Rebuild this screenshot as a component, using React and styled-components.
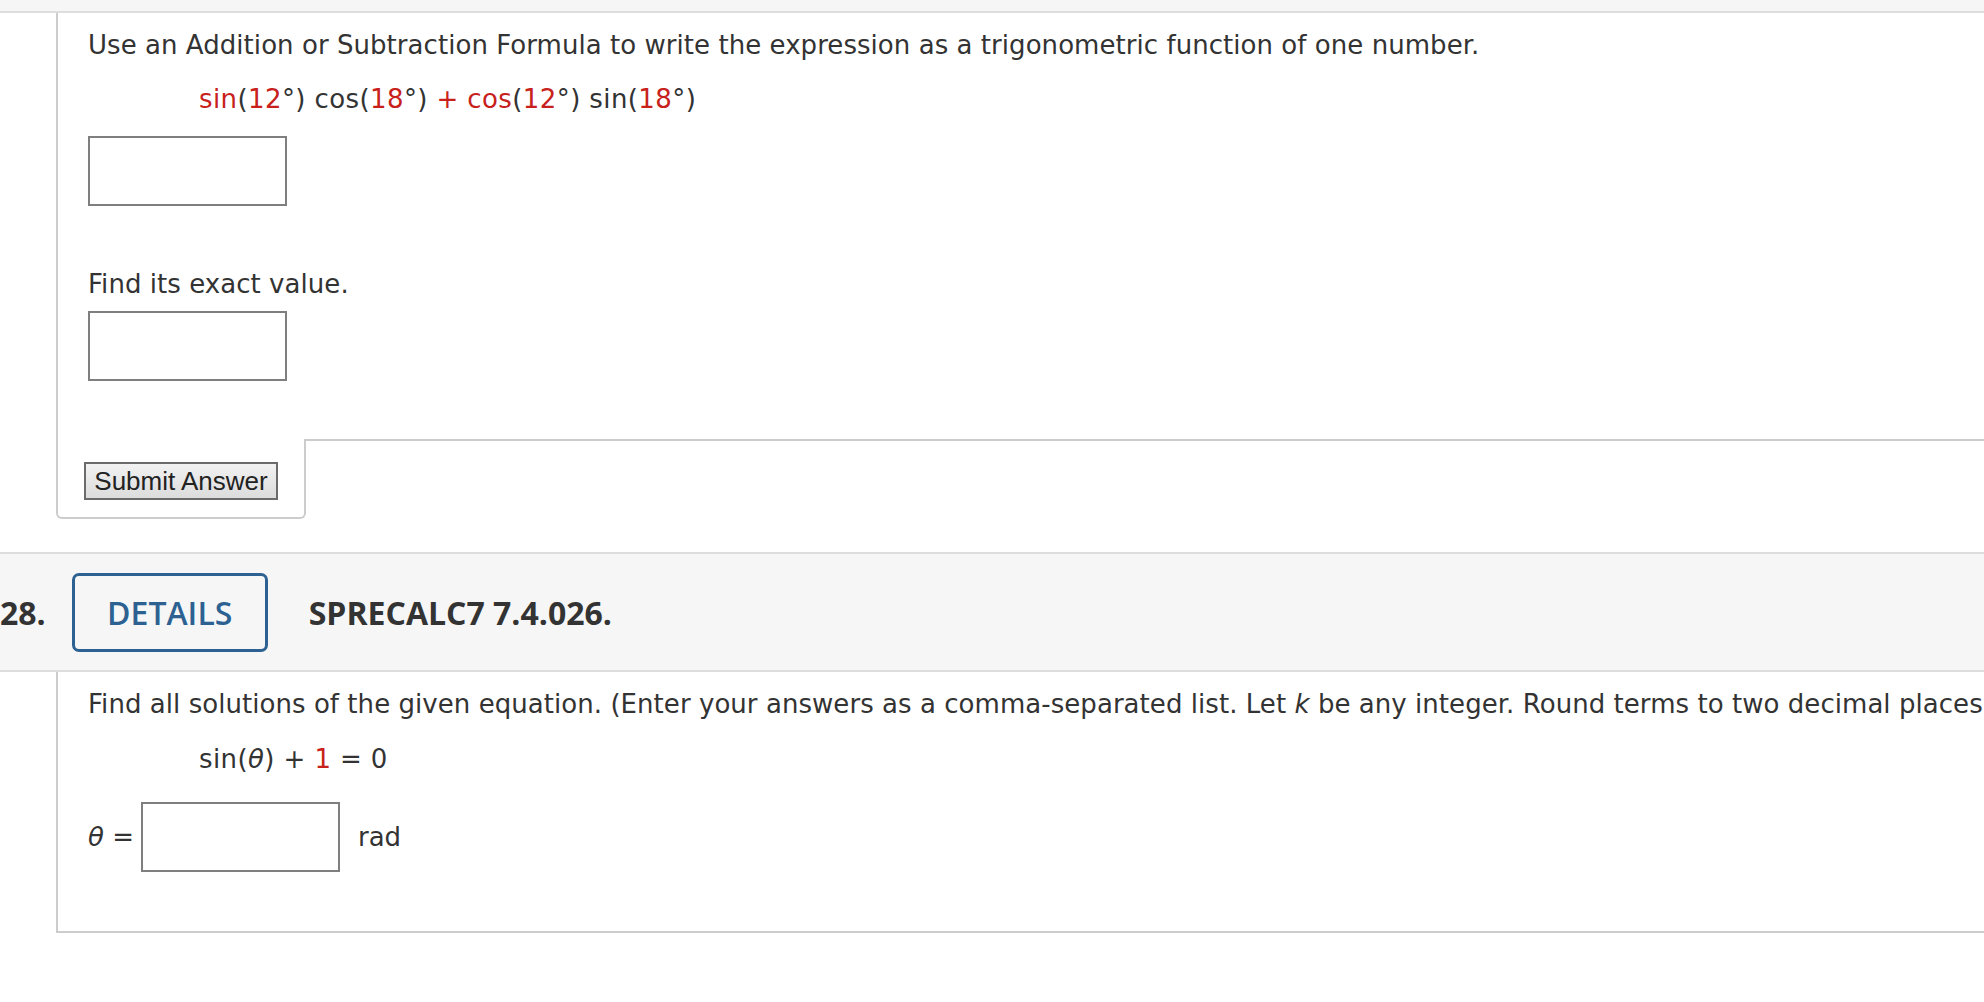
import React from 'react';
import styled, { createGlobalStyle } from 'styled-components';

const GlobalStyle = createGlobalStyle`
  html, body {
    margin: 0;
    padding: 0;
    background: #ffffff;
    overflow: hidden;
  }
  body {
    font-family: "DejaVu Sans", Verdana, sans-serif;
    color: #333333;
  }
`;

const RED = '#c8211b';

const Page = styled.div`
  width: 100%;
  overflow: hidden;
`;

const HeaderBand = styled.div`
  display: flex;
  align-items: center;
  box-sizing: content-box;
  height: ${p => (p.$cut ? '11px' : '116px')};
  margin-top: ${p => p.$gap || 0}px;
  background: #f6f6f6;
  border-top: ${p => (p.$cut ? 'none' : '2px solid #dddddd')};
  border-bottom: 2px solid #dddddd;
  font-family: "Open Sans", "Noto Sans", sans-serif;
`;

const QNumber = styled.span`
  font-size: 32px;
  font-weight: 700;
  color: #333333;
  margin-right: 26px;
`;

const DetailsButton = styled.button`
  box-sizing: border-box;
  width: 196px;
  height: 79px;
  border: 3px solid #2d6192;
  border-radius: 7px;
  background: transparent;
  color: #2d6192;
  font-family: "Open Sans", "Noto Sans", sans-serif;
  font-size: 32px;
  font-weight: 600;
  padding: 0;
`;

const QTitle = styled.span`
  margin-left: 41px;
  font-size: 32px;
  font-weight: 700;
  color: #333333;
`;

const QuestionBody = styled.div`
  margin-left: 56px;
  border-left: 2px solid #cccccc;
  border-bottom: ${p => (p.$closed ? '2px solid #cccccc' : 'none')};
  padding: 13px 0 ${p => p.$bottom}px 30px;
  font-size: 26px;
  line-height: 39px;
  white-space: nowrap;
  overflow: hidden;
`;

const Prompt = styled.p`
  margin: ${p => p.$top || 0}px 0 0 0;
  letter-spacing: 0.05px;
`;

const MathLine = styled.div`
  margin: ${p => p.$top}px 0 0 111px;
  letter-spacing: 0.4px;
`;

const Red = styled.span`
  color: ${RED};
`;

const Var = styled.i`
  font-style: italic;
`;

const AnswerBox = styled.input`
  box-sizing: border-box;
  display: block;
  width: 199px;
  height: 70px;
  margin-top: ${p => p.$top || 0}px;
  border: 2px solid #7f7f7f;
  border-radius: 0;
  background: #ffffff;
  font-size: 26px;
  outline: none;
`;

const AnswerRow = styled.div`
  display: flex;
  align-items: center;
  margin-top: ${p => p.$top}px;

  ${AnswerBox} {
    margin: 0 18px 0 7px;
  }
`;

const SubmitRow = styled.div`
  display: flex;
  align-items: flex-start;
  margin-left: 56px;
`;

const SubmitTab = styled.div`
  box-sizing: border-box;
  width: 250px;
  height: 80px;
  padding: 23px 0 0 26px;
  border: 2px solid #cccccc;
  border-top: none;
  border-radius: 0 0 6px 6px;
`;

const SubmitButton = styled.button`
  box-sizing: border-box;
  width: 194px;
  height: 38px;
  padding: 0;
  border: 2px solid #6b6b6b;
  background: linear-gradient(#f2f2f2, #dcdcdc);
  color: #222222;
  font-family: "Liberation Sans", Arial, sans-serif;
  font-size: 26px;
`;

const FeedbackArea = styled.div`
  flex: 1;
  border-top: 2px solid #cccccc;
`;

export default function App() {
  return (
    <Page>
      <GlobalStyle />
      <HeaderBand $cut />

      <QuestionBody $bottom={58}>
        <Prompt>
          Use an Addition or Subtraction Formula to write the expression as a trigonometric function of one number.
        </Prompt>
        <MathLine $top={15}>
          <Red>sin</Red>(<Red>12</Red>°) cos(<Red>18</Red>°) <Red>+ cos</Red>(<Red>12</Red>°) sin(<Red>18</Red>°)
        </MathLine>
        <AnswerBox $top={17} />
        <Prompt $top={59}>Find its exact value.</Prompt>
        <AnswerBox $top={7} />
      </QuestionBody>
      <SubmitRow>
        <SubmitTab>
          <SubmitButton>Submit Answer</SubmitButton>
        </SubmitTab>
        <FeedbackArea />
      </SubmitRow>

      <HeaderBand $gap={33}>
        <QNumber>28.</QNumber>
        <DetailsButton>DETAILS</DetailsButton>
        <QTitle>SPRECALC7 7.4.026.</QTitle>
      </HeaderBand>

      <QuestionBody $closed $bottom={59}>
        <Prompt>
          Find all solutions of the given equation. (Enter your answers as a comma-separated list. Let <Var>k</Var> be any integer. Round terms to two decimal places where appropriate.)
        </Prompt>
        <MathLine $top={16}>
          sin(<Var>θ</Var>) + <Red>1</Red> = 0
        </MathLine>
        <AnswerRow $top={23}>
          <span>
            <Var>θ</Var> =
          </span>
          <AnswerBox />
          <span>rad</span>
        </AnswerRow>
      </QuestionBody>
    </Page>
  );
}
